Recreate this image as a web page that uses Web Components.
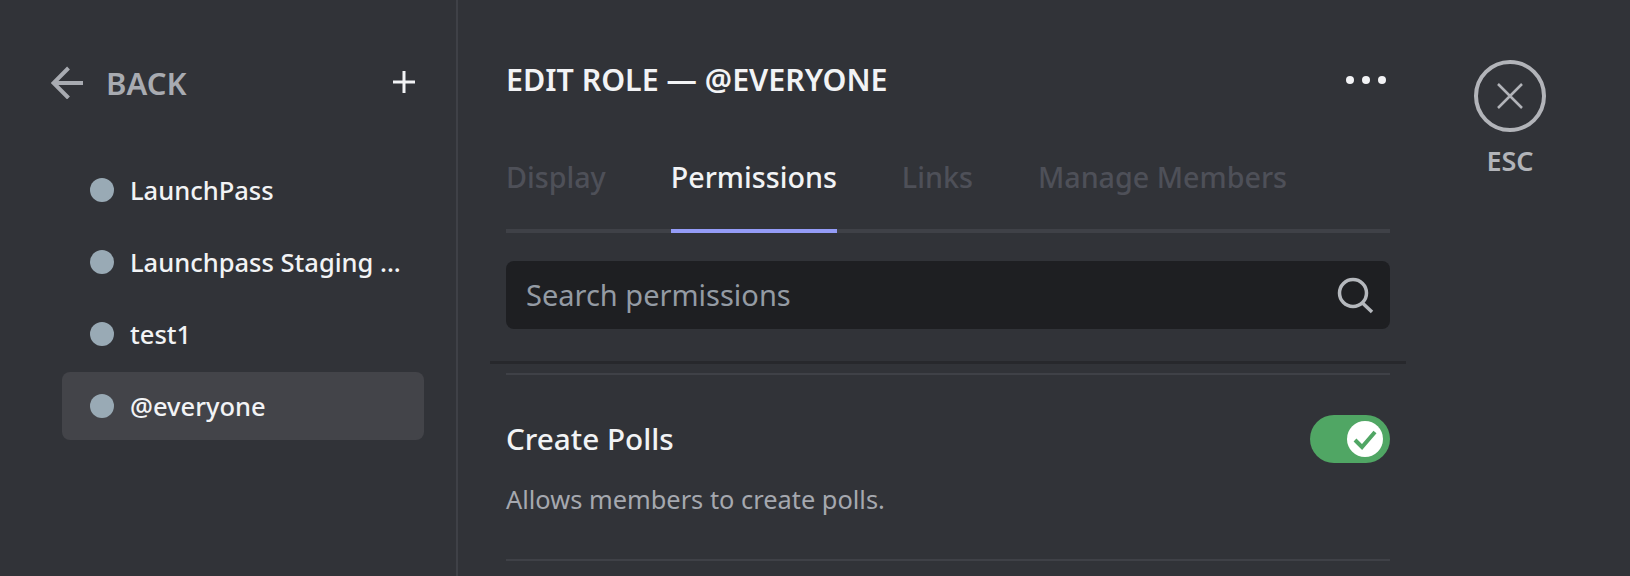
<!DOCTYPE html>
<html>
<head>
<meta charset="utf-8">
<style>
  html, body { margin: 0; height: 576px; overflow: hidden; background: #313338; }
  body { font-family: "Noto Sans", sans-serif; }
</style>
</head>
<body>
<role-settings>
  <role-sidebar slot="sidebar">
    <role-item>LaunchPass</role-item>
    <role-item>Launchpass Staging ...</role-item>
    <role-item>test1</role-item>
    <role-item selected>@everyone</role-item>
  </role-sidebar>
  <role-editor slot="main">
    <permission-row title-text="Create Polls" desc="Allows members to create polls."></permission-row>
  </role-editor>
  <close-button slot="close"></close-button>
</role-settings>

<script>
class RoleSettings extends HTMLElement {
  constructor() {
    super();
    this.attachShadow({ mode: "open" }).innerHTML = `
      <style>
        :host { display: flex; width: 1630px; height: 576px; overflow: hidden; color: #f2f3f5; }
        .side { flex: none; width: 456px; border-right: 2px solid #3f4147; }
        .main { flex: none; width: 948px; }
        .close { flex: none; margin-left: 68px; }
      </style>
      <div class="side"><slot name="sidebar"></slot></div>
      <div class="main"><slot name="main"></slot></div>
      <div class="close"><slot name="close"></slot></div>`;
  }
}

class RoleSidebar extends HTMLElement {
  constructor() {
    super();
    this.attachShadow({ mode: "open" }).innerHTML = `
      <style>
        :host { display: block; padding: 60px 32px 0 51px; }
        .head { display: flex; align-items: center; height: 44px; }
        .back { font-size: 31px; font-weight: 600; color: #a8abb1; margin-left: 23px; margin-top: 2px; }
        .plus { margin-left: auto; margin-right: 8px; display: block; }
        svg { display: block; flex: none; }
        .list { display: flex; flex-direction: column; gap: 4px; margin: 52px 0 0 11px; }
      </style>
      <div class="head">
        <svg width="32" height="34" viewBox="0 0 32 34" fill="none" stroke="#a8abb1" stroke-width="4"><path d="M32 18H3M17.500 3 2.500 18 17.500 33"/></svg>
        <span class="back">BACK</span>
        <svg class="plus" width="24" height="24" viewBox="0 0 24 24" fill="none" stroke="#f2f3f5" stroke-width="3"><path d="M12 1V23M1 12H23"/></svg>
      </div>
      <div class="list"><slot></slot></div>`;
  }
}

class RoleItem extends HTMLElement {
  constructor() {
    super();
    this.attachShadow({ mode: "open" }).innerHTML = `
      <style>
        :host { display: flex; align-items: center; height: 68px; padding: 0 28px; gap: 16px; border-radius: 8px; font-size: 25.500px; font-weight: 500; color: #f2f3f5; white-space: nowrap; }
        :host([selected]) { background: #434449; }
        .dot { flex: none; width: 24px; height: 24px; border-radius: 50%; background: #99aab5; }
      </style>
      <span class="dot"></span><span><slot></slot></span>`;
  }
}

class RoleEditor extends HTMLElement {
  constructor() {
    super();
    this.attachShadow({ mode: "open" }).innerHTML = `
      <style>
        :host { display: block; }
        .top { padding: 60px 16px 32px 48px; }
        .title-row { display: flex; align-items: center; justify-content: space-between; height: 40px; }
        h2 { margin: -2px 0 0; font-size: 30.400px; font-weight: 600; color: #f2f3f5; }
        .more { display: flex; gap: 8px; margin-right: 4px; }
        .more i { width: 8px; height: 8px; border-radius: 50%; background: #f2f3f5; }
        /* header shadow is inset from the column, wider than the content */
        .shade { height: 3px; margin-left: 32px; background: #27282c; }
        .rest { padding: 9px 16px 0 48px; }
      </style>
      <div class="top">
        <div class="title-row"><h2>EDIT ROLE — @EVERYONE</h2><div class="more"><i></i><i></i><i></i></div></div>
        <tab-bar></tab-bar>
        <search-box placeholder="Search permissions"></search-box>
      </div>
      <div class="shade"></div>
      <div class="rest"><slot></slot></div>`;
  }
}

class TabBar extends HTMLElement {
  constructor() {
    super();
    this.attachShadow({ mode: "open" }).innerHTML = `
      <style>
        :host { display: flex; gap: 65px; height: 76px; margin-top: 53px; border-bottom: 4px solid #3f4147; margin-bottom: 28px; box-sizing: content-box; font-size: 28.700px; font-weight: 500; color: #4e5058; }
        span { display: block; height: 76px; padding-top: 4px; box-sizing: border-box; white-space: nowrap; }
        .on { color: #f2f3f5; border-bottom: 4px solid #949cf7; height: 80px; }
      </style>
      <span>Display</span><span class="on">Permissions</span><span>Links</span><span>Manage Members</span>`;
  }
}

class SearchBox extends HTMLElement {
  constructor() {
    super();
    this.attachShadow({ mode: "open" }).innerHTML = `
      <style>
        :host { display: flex; align-items: center; justify-content: space-between; height: 68px; padding: 0 16px 0 20px; background: #1e1f22; border-radius: 8px; font-size: 29px; color: #949ba4; }
        span { margin-top: -2px; }
        svg { display: block; }
      </style>
      <span>${this.getAttribute("placeholder")}</span>
      <svg width="38" height="38" viewBox="0 0 38 38" fill="none" stroke="#b5b8bd" stroke-width="3.500"><circle cx="17" cy="17" r="13.500"/><path d="M26.500 27 36 36"/></svg>`;
  }
}

class PermissionRow extends HTMLElement {
  constructor() {
    super();
    this.attachShadow({ mode: "open" }).innerHTML = `
      <style>
        :host { display: block; height: 184px; border-top: 2px solid #3f4147; border-bottom: 2px solid #3f4147; box-sizing: content-box; }
        .row { display: flex; align-items: center; justify-content: space-between; margin-top: 40px; height: 48px; }
        .name { margin-top: -2px; font-size: 29.700px; font-weight: 500; color: #f2f3f5; }
        .desc { margin-top: 19px; font-size: 25.400px; color: #a5a8af; }
        .toggle { width: 80px; height: 48px; border-radius: 24px; background: #50a664; display: flex; align-items: center; justify-content: flex-end; padding-right: 7px; box-sizing: border-box; }
        svg { display: block; }
      </style>
      <div class="row">
        <span class="name">${this.getAttribute("title-text")}</span>
        <span class="toggle"><svg width="36" height="36" viewBox="0 0 36 36"><circle cx="18" cy="18" r="18" fill="#fff"/><path d="M8 19 15 26 28 11" fill="none" stroke="#50a664" stroke-width="4"/></svg></span>
      </div>
      <div class="desc">${this.getAttribute("desc")}</div>`;
  }
}

class CloseButton extends HTMLElement {
  constructor() {
    super();
    this.attachShadow({ mode: "open" }).innerHTML = `
      <style>
        :host { display: flex; flex-direction: column; align-items: center; width: 72px; padding-top: 60px; color: #b2b4b9; }
        .ring { width: 72px; height: 72px; box-sizing: border-box; border: 4px solid #b2b4b9; border-radius: 50%; display: flex; align-items: center; justify-content: center; }
        svg { display: block; }
        .esc { margin-top: 12px; font-size: 27px; font-weight: 600; line-height: 34px; }
      </style>
      <div class="ring"><svg width="26" height="26" viewBox="0 0 26 26" fill="none" stroke="#b2b4b9" stroke-width="2.500"><path d="M1 1 25 25M25 1 1 25"/></svg></div>
      <div class="esc">ESC</div>`;
  }
}

customElements.define("role-settings", RoleSettings);
customElements.define("role-sidebar", RoleSidebar);
customElements.define("role-item", RoleItem);
customElements.define("role-editor", RoleEditor);
customElements.define("tab-bar", TabBar);
customElements.define("search-box", SearchBox);
customElements.define("permission-row", PermissionRow);
customElements.define("close-button", CloseButton);
</script>
</body>
</html>
